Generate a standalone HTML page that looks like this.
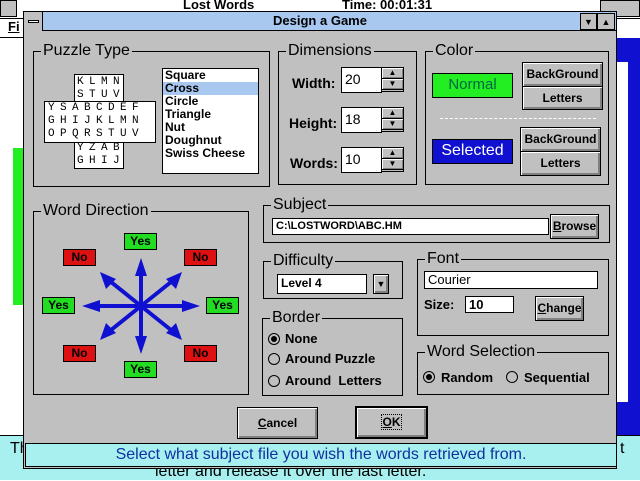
<!DOCTYPE html>
<html><head><style>
*{margin:0;padding:0;box-sizing:border-box}
body{width:640px;height:480px;position:relative;overflow:hidden;background:#fff;font-family:"Liberation Sans",Arial,sans-serif}
.a{position:absolute}
.b{font-weight:bold;font-size:12px}
.grp{position:absolute;border:1px solid #000;}
.gt{position:absolute;background:#c0c0c0;font-size:16px;line-height:16px;padding:0 2px;top:-9px;left:7px;color:#000}
.inp{position:absolute;background:#fff;border:1px solid #000;font-size:13px;font-weight:bold;padding-left:3px;line-height:16px}
.btn{position:absolute;background:#c0c0c0;border:1px solid #000;box-shadow:inset 1px 1px 0 #fff,inset -2px -2px 0 #808080;font-weight:bold;font-size:12px;text-align:center}
.lab{position:absolute;font-size:12px;font-weight:bold;text-align:center;border:1px solid #000;line-height:14px}
.y{background:#22dd22}.n{background:#dd1111}
.rad{position:absolute;width:12px;height:12px;border:1px solid #000;border-radius:50%;background:#c0c0c0}
.rad.on::after{content:"";position:absolute;left:2px;top:2px;width:6px;height:6px;border-radius:50%;background:#000}
.sp{position:absolute;width:23px;height:25px;background:#c0c0c0;border:1px solid #000}
.sp div{height:11px;border-bottom:1px solid #000;box-shadow:inset 1px 1px 0 #fff,inset -1px -1px 0 #808080;font-size:8px;text-align:center;line-height:10px}
.mono{font-family:"Liberation Mono",monospace;font-size:11px;line-height:13px;letter-spacing:5.4px}
</style></head><body>
<div class="a" style="left:0;top:0;width:17px;height:17px;background:#c0c0c0;border:1px solid #000"></div>
<div class="a b" style="left:183px;top:0;font-size:13px;line-height:10px">Lost Words</div>
<div class="a b" style="left:342px;top:0;font-size:13px;line-height:10px">Time: 00:01:31</div>
<div class="a" style="left:600px;top:0;width:40px;height:17px;background:#c0c0c0;border:1px solid #000"></div>
<div class="a" style="left:0;top:18px;width:640px;height:1px;background:#000"></div>
<div class="a b" style="left:8px;top:19px;font-size:13px;text-decoration:underline">Fi</div>
<div class="a" style="left:0;top:37px;width:24px;height:1px;background:#000"></div>
<div class="a" style="left:13px;top:148px;width:12px;height:157px;background:#22ee22"></div>
<div class="a" style="left:617px;top:38px;width:23px;height:397px;background:#1010d0"></div>
<div class="a" style="left:617px;top:62px;width:11px;height:340px;background:#fff"></div>
<div class="a" style="left:0;top:435px;width:640px;height:45px;background:#a8f0f0;border-top:1px solid #000"></div>
<div class="a" style="left:10px;top:440px;font-size:16px">Th</div>
<div class="a" style="left:620px;top:440px;font-size:16px">t</div>
<div class="a" style="left:155px;top:463px;font-size:16px">letter and release it over the last letter.</div>
<div class="a" style="left:23px;top:11px;width:594px;height:458px;background:#c0c0c0;border:1px solid #000"></div>
<div class="a" style="left:24px;top:12px;width:592px;height:19px;background:#a8c8f0;border-bottom:1px solid #000"></div>
<div class="a" style="left:24px;top:12px;width:19px;height:19px;background:#c0c0c0;border-right:1px solid #000"></div>
<div class="a" style="left:28px;top:20px;width:11px;height:3px;background:#fff;border:1px solid #000"></div>
<div class="a b" style="left:24px;top:13px;width:592px;text-align:center;font-size:13px;line-height:16px">Design a Game</div>
<div class="a" style="left:580px;top:13px;width:17px;height:17px;background:#c0c0c0;border:1px solid #000;font-size:9px;text-align:center;line-height:16px">▼</div>
<div class="a" style="left:597px;top:13px;width:18px;height:17px;background:#c0c0c0;border:1px solid #000;font-size:9px;text-align:center;line-height:16px">▲</div>

<div class="grp" style="left:33px;top:51px;width:237px;height:136px"><div class="gt">Puzzle Type</div></div>
<div class="a" style="left:74px;top:74px;width:50px;height:95px;background:#fff;border:1px solid #000"></div>
<div class="a" style="left:44px;top:101px;width:112px;height:42px;background:#fff;border:1px solid #000"></div>
<div class="a" style="left:75px;top:102px;width:48px;height:40px;background:#fff"></div>
<div class="a mono" style="left:77px;top:76px">KLMN<br>STUV</div>
<div class="a mono" style="left:48px;top:102px">YSABCDEF<br>GHIJKLMN<br>OPQRSTUV</div>
<div class="a mono" style="left:77px;top:142px">YZAB<br>GHIJ</div>
<div class="a" style="left:162px;top:68px;width:97px;height:106px;background:#fff;border:1px solid #000"></div>
<div class="a" style="left:163px;top:82px;width:95px;height:13px;background:#a8c8f0"></div>
<div class="a b" style="left:165px;top:69px;line-height:13px">Square<br>Cross<br>Circle<br>Triangle<br>Nut<br>Doughnut<br>Swiss Cheese</div>

<div class="grp" style="left:278px;top:51px;width:139px;height:134px"><div class="gt">Dimensions</div></div>
<div class="a b" style="left:292px;top:75px;font-size:14px">Width:</div>
<div class="a b" style="left:289px;top:115px;font-size:14px">Height:</div>
<div class="a b" style="left:290px;top:155px;font-size:14px">Words:</div>
<div class="inp" style="left:341px;top:67px;width:41px;height:26px;line-height:22px;font-size:14px;font-weight:normal">20</div>
<div class="inp" style="left:341px;top:107px;width:41px;height:26px;line-height:22px;font-size:14px;font-weight:normal">18</div>
<div class="inp" style="left:341px;top:147px;width:41px;height:26px;line-height:22px;font-size:14px;font-weight:normal">10</div>
<div class="sp" style="left:381px;top:67px"><div>▲</div><div>▼</div></div>
<div class="sp" style="left:381px;top:107px"><div>▲</div><div>▼</div></div>
<div class="sp" style="left:381px;top:147px"><div>▲</div><div>▼</div></div>

<div class="grp" style="left:425px;top:51px;width:184px;height:134px"><div class="gt">Color</div></div>
<div class="a" style="left:432px;top:73px;width:81px;height:25px;background:#22ee22;border:1px solid #000;text-align:center;font-size:15px;line-height:22px;color:#064">Normal</div>
<div class="a" style="left:432px;top:139px;width:81px;height:25px;background:#1010d0;border:1px solid #000;text-align:center;font-size:16px;line-height:22px;color:#fff">Selected</div>
<div class="btn" style="left:522px;top:62px;width:81px;height:25px;line-height:22px">BackGround</div>
<div class="btn" style="left:522px;top:86px;width:81px;height:24px;line-height:22px">Letters</div>
<div class="btn" style="left:520px;top:127px;width:81px;height:25px;line-height:22px">BackGround</div>
<div class="btn" style="left:520px;top:151px;width:81px;height:25px;line-height:22px">Letters</div>
<div class="a" style="left:440px;top:118px;width:156px;border-top:1px dashed #fff"></div>

<div class="grp" style="left:33px;top:211px;width:216px;height:184px"><div class="gt">Word Direction</div></div>
<svg class="a" style="left:33px;top:211px" width="216" height="184" viewBox="33 211 216 184">
<g stroke="#1010d0" stroke-width="4" fill="#1010d0">
<line x1="141" y1="306" x2="141" y2="265"/><line x1="141" y1="306" x2="141" y2="347"/>
<line x1="141" y1="306" x2="88" y2="306"/><line x1="141" y1="306" x2="194" y2="306"/>
<line x1="141" y1="306" x2="106" y2="278"/><line x1="141" y1="306" x2="176" y2="278"/>
<line x1="141" y1="306" x2="106" y2="334"/><line x1="141" y1="306" x2="176" y2="334"/>
</g>
<g fill="#1010d0">
<polygon points="141,258 135,276 147,276"/><polygon points="141,354 135,336 147,336"/>
<polygon points="82,306 100,300 100,312"/><polygon points="200,306 182,300 182,312"/>
<polygon points="100,272 106,289 116,279"/><polygon points="182,272 176,289 166,279"/>
<polygon points="100,340 106,323 116,333"/><polygon points="182,340 176,323 166,333"/>
</g></svg>
<div class="lab y" style="left:124px;top:233px;width:33px;height:17px">Yes</div>
<div class="lab n" style="left:63px;top:249px;width:33px;height:17px">No</div>
<div class="lab n" style="left:184px;top:249px;width:33px;height:17px">No</div>
<div class="lab y" style="left:42px;top:297px;width:33px;height:17px">Yes</div>
<div class="lab y" style="left:206px;top:297px;width:33px;height:17px">Yes</div>
<div class="lab n" style="left:63px;top:345px;width:33px;height:17px">No</div>
<div class="lab n" style="left:184px;top:345px;width:33px;height:17px">No</div>
<div class="lab y" style="left:124px;top:361px;width:33px;height:17px">Yes</div>

<div class="grp" style="left:263px;top:205px;width:347px;height:38px"><div class="gt">Subject</div></div>
<div class="inp" style="left:272px;top:218px;width:277px;height:17px;font-size:11px;line-height:15px">C:\LOSTWORD\ABC.HM</div>
<div class="btn" style="left:550px;top:214px;width:49px;height:25px;line-height:23px"><u>B</u>rowse</div>

<div class="grp" style="left:263px;top:261px;width:140px;height:38px"><div class="gt">Difficulty</div></div>
<div class="inp" style="left:277px;top:274px;width:90px;height:20px;font-size:12px">Level 4</div>
<div class="btn" style="left:373px;top:274px;width:16px;height:20px;line-height:18px;font-size:9px">▼</div>

<div class="grp" style="left:262px;top:318px;width:141px;height:78px"><div class="gt">Border</div></div>
<div class="rad on" style="left:268px;top:333px"></div>
<div class="a b" style="left:285px;top:331px;font-size:13px">None</div>
<div class="rad" style="left:268px;top:353px"></div>
<div class="a b" style="left:285px;top:351px;font-size:13px">Around Puzzle</div>
<div class="rad" style="left:268px;top:375px"></div>
<div class="a b" style="left:285px;top:373px;font-size:13px">Around &nbsp;Letters</div>

<div class="grp" style="left:417px;top:259px;width:192px;height:77px"><div class="gt">Font</div></div>
<div class="inp" style="left:424px;top:271px;width:174px;height:18px;font-weight:normal;font-size:13px">Courier</div>
<div class="a b" style="left:424px;top:297px;font-size:13px">Size:</div>
<div class="inp" style="left:465px;top:296px;width:49px;height:17px">10</div>
<div class="btn" style="left:535px;top:296px;width:49px;height:25px;line-height:23px"><u>C</u>hange</div>

<div class="grp" style="left:417px;top:352px;width:192px;height:43px"><div class="gt">Word Selection</div></div>
<div class="rad on" style="left:423px;top:371px"></div>
<div class="a b" style="left:441px;top:370px;font-size:13px">Random</div>
<div class="rad" style="left:506px;top:371px"></div>
<div class="a b" style="left:524px;top:370px;font-size:13px">Sequential</div>

<div class="btn" style="left:237px;top:407px;width:81px;height:32px;line-height:30px"><u>C</u>ancel</div>
<div class="btn" style="left:355px;top:406px;width:73px;height:33px;line-height:29px;border:2px solid #000"><span style="outline:1px dotted #000"><u>O</u>K</span></div>

<div class="a" style="left:25px;top:443px;width:592px;height:24px;background:#a8f0f0;border:1px solid #000;text-align:center;color:#1030a0;font-size:16px;line-height:22px">Select what subject file you wish the words retrieved from.</div>
</body></html>
